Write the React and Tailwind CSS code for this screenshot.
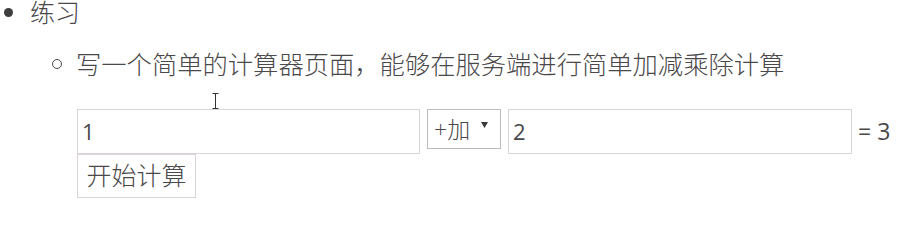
import React from "react";

export default function App() {
  const font = { fontFamily: '"Open Sans", "Noto Sans CJK SC", sans-serif' };
  return (
    <div className="relative w-[903px] h-[211px] bg-white text-[#4a484a] font-light overflow-hidden" style={font}>
      <div className="flex items-center">
        <span className="ml-[4px] w-[9px] h-[9px] rounded-full bg-[#3f3d3f]"></span>
        <span className="ml-[17px] text-[25px] leading-[24px]">练习</span>
      </div>
      <div className="flex items-center mt-[28px]">
        <span className="ml-[52px] w-[10px] h-[10px] rounded-full border-[1.5px] border-[#4a484a]"></span>
        <span className="ml-[14px] text-[25.3px] leading-[24px] whitespace-nowrap">写一个简单的计算器页面，能够在服务端进行简单加减乘除计算</span>
      </div>
      <div className="ml-[77px] mt-[33px] flex items-start gap-[7px]">
        <div className="w-[343px] h-[45px] border border-[#dad4da] flex items-center pl-[4px] text-[22px] font-normal">1</div>
        <div className="w-[74px] h-[40px] border border-[#bfbabf] flex items-center pl-[6px] text-[23px]">
          <span>+加</span>
          <svg className="ml-[11px] mb-[8px]" width="7" height="7" viewBox="0 0 7 7">
            <polygon points="0,0 7,0 3.5,6" fill="#3a383a" />
          </svg>
        </div>
        <div className="w-[344px] h-[45px] border border-[#dad4da] flex items-center pl-[4px] text-[22px] font-normal">2</div>
        <div className="h-[45px] flex items-center ml-[-1px] text-[23px] font-normal">= 3</div>
      </div>
      <div className="ml-[77px] w-[119px] h-[44px] border border-[#dad4da] flex items-center justify-center text-[25px]">开始计算</div>
      <svg className="absolute left-[212px] top-[93px]" width="7" height="16" viewBox="0 0 7 16">
        <path d="M0.5 0.5 H6.5 M3.5 0.5 V15.5 M0.5 15.5 H6.5" stroke="#ffffff" strokeWidth="2.5" fill="none" />
        <path d="M0.5 0.5 H6.5 M3.5 0.5 V15.5 M0.5 15.5 H6.5" stroke="#333" strokeWidth="1" fill="none" />
      </svg>
    </div>
  );
}
